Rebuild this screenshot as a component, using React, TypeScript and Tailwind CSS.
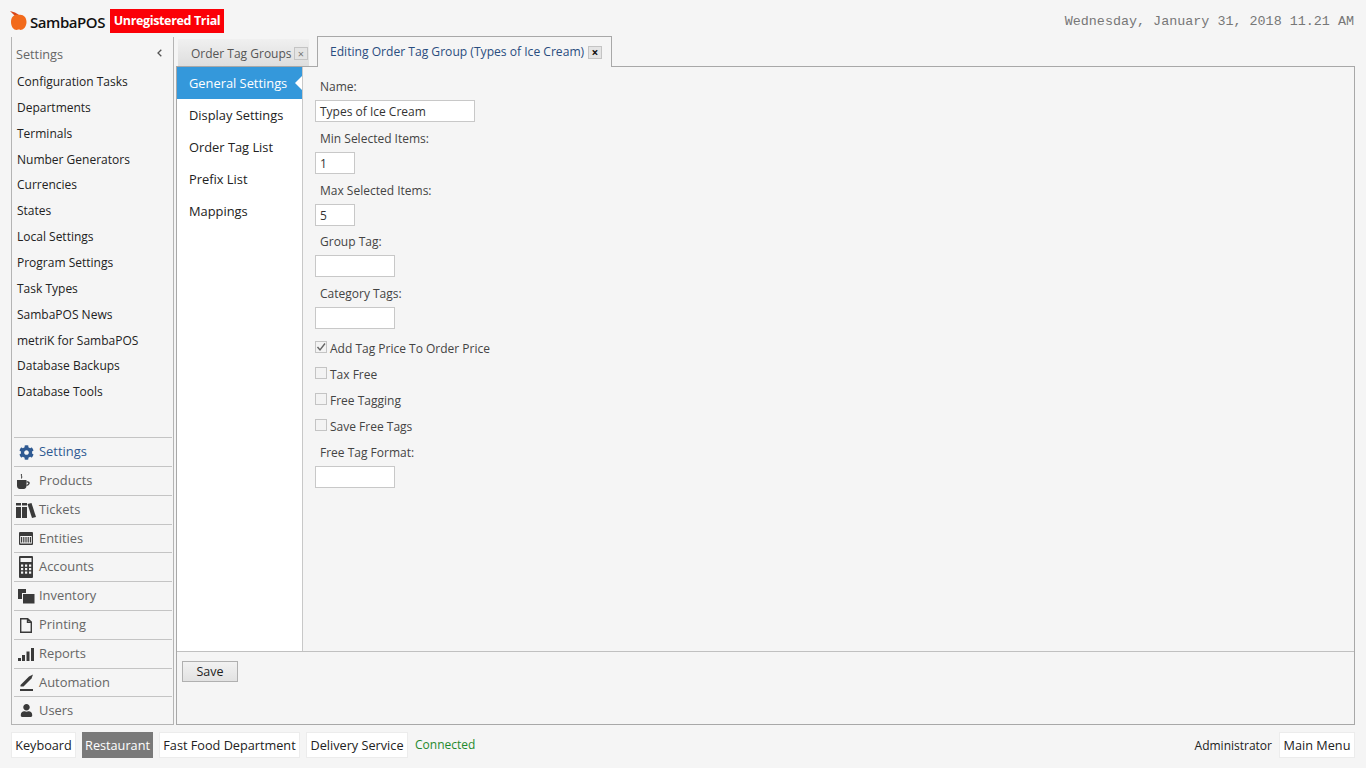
import React from "react";
import { FaCog, FaUser } from "react-icons/fa";

const F = "font-['Open_Sans',sans-serif]";

const Coffee = () => (
  <svg width="13" height="15" viewBox="0 0 13 15" fill="#3a3a3a" className="-ml-[6px]">
    <path d="M0 6h9.500v5.500c0 2-1 3.500-2.800 3.500H2.800C1 15 0 13.500 0 11.500z" />
    <path d="M9.500 7.500c2.500-.8 3.800 1 3 2.500-.7 1.300-2 1.800-3 2v-1.200c1-.3 1.700-.8 1.800-1.500.1-.6-.8-1-1.800-.6z" />
    <path d="M4.500 0c-.9 1.500 1 2 0 4.500" fill="none" stroke="#3a3a3a" strokeWidth="1" />
  </svg>
);
const Books = () => (
  <svg width="20" height="15" viewBox="0 0 20 15" fill="#3a3a3a" className="shrink-0">
    <rect x="0" y="0" width="5" height="15" />
    <rect x="6" y="0" width="5" height="15" />
    <rect x="0" y="2.500" width="5" height="1.500" fill="#f5f5f5" />
    <rect x="6" y="2.500" width="5" height="1.500" fill="#f5f5f5" />
    <path d="M11.500 1l4-1L20 14l-4 1z" />
  </svg>
);
const Barcode = () => (
  <svg width="14" height="13" viewBox="0 0 14 13">
    <rect x="0" y="0" width="14" height="13" rx="1" fill="#3a3a3a" />
    <rect x="1.200" y="4" width="11.600" height="7.500" fill="#f5f5f5" />
    <path d="M2.500 5v5.500M4.300 5v5.500M6.100 5v5.500M7.900 5v5.500M9.700 5v5.500M11.500 5v5.500" stroke="#3a3a3a" strokeWidth="1" />
  </svg>
);
const Calc = () => (
  <svg width="14" height="22" viewBox="0 0 14 22">
    <rect x="0" y="0" width="14" height="22" rx="1" fill="#3a3a3a" />
    <rect x="1.500" y="2" width="11" height="4" fill="#f5f5f5" />
    {[8.500, 12, 15.500].map((y) =>
      [2, 6, 10].map((x) => <rect key={`${x}-${y}`} x={x} y={y} width="2.200" height="2.200" fill="#f5f5f5" />)
    )}
  </svg>
);
const Layers = () => (
  <svg width="17" height="15" viewBox="0 0 17 15" fill="#3a3a3a">
    <rect x="0" y="0" width="8" height="10" />
    <rect x="4.500" y="4.500" width="12.500" height="10.500" stroke="#f5f5f5" strokeWidth="1" />
  </svg>
);
const Doc = () => (
  <svg width="12" height="15" viewBox="0 0 12 15">
    <path d="M.7.7h7L11.300 4v10.300H.7z M7.500.7V4.300h3.800" fill="none" stroke="#3a3a3a" strokeWidth="1.400" />
  </svg>
);
const Bars = () => (
  <svg width="16" height="13" viewBox="0 0 16 13" fill="#3a3a3a">
    <rect x="0" y="10" width="3" height="3" />
    <rect x="4" y="7" width="3" height="6" />
    <rect x="8.500" y="3.500" width="3" height="9.500" />
    <rect x="13" y="0" width="3" height="13" />
  </svg>
);
const Pen = () => (
  <svg width="13" height="17" viewBox="0 0 13 17" fill="#3a3a3a">
    <path d="M.5 11L9 2.500 13 .5l-1.500 4L3.500 12.500H.5z" />
    <rect x="0" y="15" width="13" height="2" />
  </svg>
);

const navItems: [string, React.ReactNode, number][] = [
  ["Settings", <FaCog size={15} color="#2f5a92" />, 29],
  ["Products", <Coffee />, 29],
  ["Tickets", <Books />, 29],
  ["Entities", <Barcode />, 28],
  ["Accounts", <Calc />, 29],
  ["Inventory", <Layers />, 29],
  ["Printing", <Doc />, 29],
  ["Reports", <Bars />, 29],
  ["Automation", <Pen />, 28],
  ["Users", <FaUser size={13} color="#3a3a3a" />, 28],
];

const settings = [
  "Configuration Tasks", "Departments", "Terminals", "Number Generators", "Currencies", "States",
  "Local Settings", "Program Settings", "Task Types", "SambaPOS News", "metriK for SambaPOS",
  "Database Backups", "Database Tools",
];

const Field = ({ label, value = "", w, gap = "mb-[4px]" }: { label: string; value?: string; w: string; gap?: string }) => (
  <div className={gap}>
    <div className="h-[26px] pl-[5px] pb-[1px] flex items-center text-[#444]">{label}</div>
    <div className={`h-[22px] ${w} bg-white border border-[#c8c8c8] pl-[4px] pt-[2px] flex items-center text-[#333]`}>{value}</div>
  </div>
);

const Check = ({ label, checked = false }: { label: string; checked?: boolean }) => (
  <div className="h-[26px] flex items-center text-[#444]">
    <div className="w-[12px] h-[12px] -mt-[5px] border border-[#c4c4c4] bg-[#f3f3f3] flex items-center justify-center mr-[3px]">
      {checked && (
        <svg width="10" height="10" viewBox="0 0 10 10">
          <path d="M1.500 5l2.500 3 5-6.500" fill="none" stroke="#666" strokeWidth="1.400" />
        </svg>
      )}
    </div>
    {label}
  </div>
);

const BarBtn = ({ children, cls, dark = false }: { children: React.ReactNode; cls: string; dark?: boolean }) => (
  <div className={`h-[26px] ${cls} flex items-center justify-center border pt-[1px] text-[12.7px] whitespace-nowrap ${dark ? "bg-[#7a7a7a] border-[#7a7a7a] text-white" : "bg-white border-[#ececec] text-[#222]"}`}>
    {children}
  </div>
);

export default function App() {
  return (
    <div className={`w-[1366px] h-[768px] overflow-hidden bg-[#f5f5f5] flex flex-col text-[12px] ${F}`}>
      <header className="h-[37px] flex items-start pl-[10px] pr-[12px] shrink-0">
        <svg width="17" height="20" viewBox="0 0 17 20" className="mt-[11px]">
          <path d="M0 0l5 1.500L10 4.500 5 5z" fill="#d9471a" />
          <path d="M8.500 4C13 3 16.500 6 16.500 11c0 5-3.500 8-6 8-1 0-1.300-.4-2-.4s-1 .4-2 .4C4 19 1 16 1 11c0-5 3-8 7.500-7z" fill="#f26a1b" />
        </svg>
        <span className="ml-[3px] mt-[12px] font-semibold text-[15px] leading-[20px] text-[#111] tracking-[-0.45px] w-[80px] whitespace-nowrap">SambaPOS</span>
        <div className="mt-[9px] w-[114px] h-[24px] bg-[#fb0007] text-white font-bold text-[12.5px] flex items-center justify-center tracking-[-0.35px] whitespace-nowrap">Unregistered Trial</div>
        <div className="ml-auto mt-[12px] font-['Liberation_Mono',monospace] text-[13.4px] leading-[20px] text-[#777] whitespace-nowrap">Wednesday, January 31, 2018 11.21 AM</div>
      </header>

      <div className="flex-1 flex pl-[11px] pr-[11px] min-h-0">
        <aside className="w-[163px] shrink-0 border-l border-r border-b border-[#b4b4b4] flex flex-col">
          <div className="h-[32.2px] flex items-center justify-between pl-[4px] pr-[11px] pt-[2px] text-[12.7px] text-[#666]">
            <span>Settings</span>
            <svg width="5" height="8" viewBox="0 0 5 8" className="-mt-[3px]">
              <path d="M4.300.7L1 4l3.300 3.300" fill="none" stroke="#555" strokeWidth="1.300" />
            </svg>
          </div>
          <div className="flex-1 pl-[5px]">
            {settings.map((s) => (
              <div key={s} className="h-[25.85px] flex items-center text-[#222] whitespace-nowrap">{s}</div>
            ))}
          </div>
          <div className="pl-[2px] pr-[1px]">
            {navItems.map(([name, icon, h], i) => (
              <div key={name} style={{ height: h }} className="border-t border-[#c4c4c4] flex items-center">
                <div className="w-[24px] flex justify-center shrink-0">{icon}</div>
                <span className={`ml-[1px] text-[12.9px] ${i === 0 ? "text-[#2f5a92]" : "text-[#666]"}`}>{name}</span>
              </div>
            ))}
          </div>
        </aside>

        <main className="flex-1 ml-[2px] flex flex-col min-w-0">
          <div className="h-[29px] flex items-end shrink-0 relative">
            <div className="ml-[2px] h-[27px] w-[131px] flex items-center pl-[13px] pt-[2px] bg-gradient-to-b from-[#f0f0f0] to-[#dedede] text-[#555] whitespace-nowrap">
              Order Tag Groups
              <span className="absolute left-[118px] top-[10px] w-[14px] h-[13px] border border-[#c4c4c4] bg-[#e4e4e4] flex items-center justify-center text-[11px] leading-none text-[#777]">×</span>
            </div>
            <div className="absolute left-[141px] top-[-1px] w-[295px] h-[31px] bg-[#f5f5f5] border border-b-0 border-[#a8a8a8] flex items-center pl-[12px] text-[12.1px] text-[#2a4d80] whitespace-nowrap z-10">
              Editing Order Tag Group (Types of Ice Cream)
              <span className="absolute left-[270px] top-[9px] w-[14px] h-[13px] border border-[#c4c4c4] bg-[#e4e4e4] flex items-center justify-center text-[12px] font-bold leading-none text-[#111]">×</span>
            </div>
          </div>

          <div className="flex-1 border border-[#a8a8a8] flex flex-col min-h-0">
            <div className="flex-1 flex border-b border-[#c0c0c0] min-h-0">
              <nav className="w-[126px] shrink-0 bg-white border-r border-[#c8c8c8]">
                <div className="relative h-[32px] bg-[#3498db] text-white flex items-center pl-[12px] pt-[1px] text-[12.85px] whitespace-nowrap">
                  General Settings
                  <span className="absolute right-0 top-[9px] border-y-[7px] border-y-transparent border-r-[7px] border-r-white" />
                </div>
                {["Display Settings", "Order Tag List", "Prefix List", "Mappings"].map((s) => (
                  <div key={s} className="h-[32px] flex items-center pl-[12px] pt-[1px] text-[12.85px] text-[#222] whitespace-nowrap">{s}</div>
                ))}
              </nav>
              <section className="flex-1 pl-[12px] pt-[7px]">
                <Field label="Name:" value="Types of Ice Cream" w="w-[160px]" />
                <Field label="Min Selected Items:" value="1" w="w-[40px]" />
                <Field label="Max Selected Items:" value="5" w="w-[40px]" gap="mb-[3px]" />
                <Field label="Group Tag:" w="w-[80px]" />
                <Field label="Category Tags:" w="w-[80px]" />
                <div className="h-[3px]" />
                <Check label="Add Tag Price To Order Price" checked />
                <Check label="Tax Free" />
                <Check label="Free Tagging" />
                <Check label="Save Free Tags" />
                <Field label="Free Tag Format:" w="w-[80px]" />
              </section>
            </div>
            <div className="h-[72px] shrink-0 pl-[5px] pt-[9px]">
              <div className="w-[56px] h-[21px] border border-[#b0b0b0] pt-[1px] text-[12.5px] bg-gradient-to-b from-[#f2f2f2] to-[#e2e2e2] flex items-center justify-center text-[#222]">Save</div>
            </div>
          </div>
        </main>
      </div>

      <footer className="h-[43px] shrink-0 flex items-start pt-[7px] pl-[11px] pr-[11px]">
        <BarBtn cls="w-[65px] mr-[6px]">Keyboard</BarBtn>
        <BarBtn cls="w-[71px] mr-[6px]" dark>Restaurant</BarBtn>
        <BarBtn cls="w-[141px] mr-[6px]">Fast Food Department</BarBtn>
        <BarBtn cls="w-[102px] mr-[7px]">Delivery Service</BarBtn>
        <div className="h-[26px] flex items-center text-[#1f8a2e]">Connected</div>
        <div className="ml-auto h-[26px] flex items-center pt-[1px] text-[#222] mr-[7px]">Administrator</div>
        <BarBtn cls="w-[76px]">Main Menu</BarBtn>
      </footer>
    </div>
  );
}
